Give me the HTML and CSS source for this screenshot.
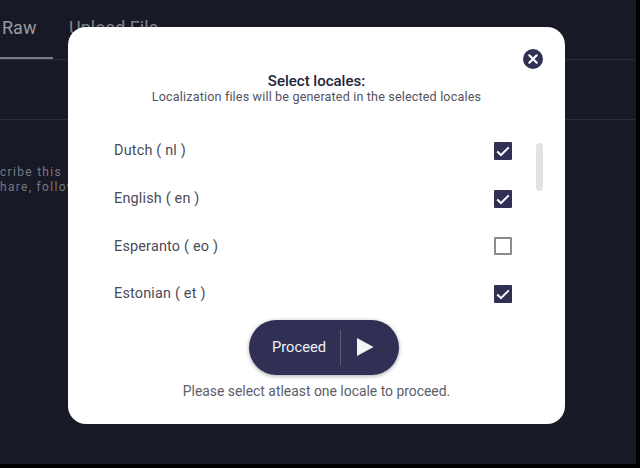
FILE: index.html
```html
<!DOCTYPE html>
<html lang="en">
<head>
<meta charset="utf-8">
<title>Select locales</title>
<link rel="stylesheet" href="styles.css">
</head>
<body>
<div class="app">
  <nav class="tabs">
    <div class="tab tab-active">Raw</div>
    <div class="tab">Upload File</div>
  </nav>
  <div class="band"></div>
  <div class="desc">
    <p>cribe this</p>
    <p>hare, follow</p>
  </div>
  <div class="modal">
    <button class="close" aria-label="Close">
      <svg viewBox="0 0 20 20" width="20" height="20"><circle cx="10" cy="10" r="10" fill="#2f3054"/><path d="M6.3 6.3l7.4 7.4M13.7 6.3l-7.4 7.4" stroke="#fff" stroke-width="2.2" stroke-linecap="round"/></svg>
    </button>
    <header class="head">
      <h1>Select locales:</h1>
      <p>Localization files will be generated in the selected locales</p>
    </header>
    <div class="list-wrap">
      <ul class="list">
        <li><span>Dutch ( nl )</span><span class="check on"><svg viewBox="0 0 18 18" width="18" height="18"><path d="M3.2 9.4l3.8 3.6 7.8-7.6" fill="none" stroke="#fff" stroke-width="2"/></svg></span></li>
        <li><span>English ( en )</span><span class="check on"><svg viewBox="0 0 18 18" width="18" height="18"><path d="M3.2 9.4l3.8 3.6 7.8-7.6" fill="none" stroke="#fff" stroke-width="2"/></svg></span></li>
        <li><span>Esperanto ( eo )</span><span class="check"></span></li>
        <li><span>Estonian ( et )</span><span class="check on"><svg viewBox="0 0 18 18" width="18" height="18"><path d="M3.2 9.4l3.8 3.6 7.8-7.6" fill="none" stroke="#fff" stroke-width="2"/></svg></span></li>
      </ul>
      <div class="thumb"></div>
    </div>
    <div class="foot">
      <button class="proceed">
        <span class="label">Proceed</span>
        <span class="sep"></span>
        <svg viewBox="0 0 18 18" width="18" height="18"><path d="M1 0l16.500 9-16.500 9z" fill="#f4f4f6"/></svg>
      </button>
      <p class="hint">Please select atleast one locale to proceed.</p>
    </div>
  </div>
</div>
</body>
</html>
```
FILE: styles.css
```css
* { box-sizing: border-box; }
html, body { margin: 0; height: 100%; background: #000; overflow: hidden; }
body { font-family: Roboto, "Liberation Sans", sans-serif; }
p, h1, ul { margin: 0; padding: 0; }

.app { position: relative; width: 636px; height: 464px; background: #171926; overflow: hidden; }

.tabs { display: flex; height: 60px; border-bottom: 1px solid #2a2c3a; }
.tab { padding: 17px 0 0 16px; font-size: 18px; line-height: 22px; color: #7f818a; }
.tab-active { width: 53px; padding-left: 2px; height: 59px; border-bottom: 2px solid #7d7e85; color: #9a9ba1; }

.band { height: 60px; border-bottom: 1px solid #2a2c3a; }

.desc { margin-top: 45px; font-size: 12px; line-height: 15px; letter-spacing: 1.3px; color: #767882; white-space: nowrap; }

.modal { position: absolute; left: 68px; top: 27px; width: 497px; height: 397px; background: #fff; border-radius: 18px; display: flex; flex-direction: column; }
.close { position: absolute; top: 22px; right: 22px; width: 20px; height: 20px; padding: 0; border: 0; background: none; display: block; }
.close svg { display: block; }

.head { padding-top: 46px; text-align: center; color: #23243a; }
.head h1 { font-size: 15px; line-height: 16px; font-weight: 500; }
.head p { font-size: 12.6px; line-height: 15px; color: #52535f; letter-spacing: 0.15px; }

.list-wrap { position: relative; margin-top: 23px; height: 191.500px; }
.list { list-style: none; padding: 0 53px 0 46px; }
.list li { height: 47.7px; display: flex; align-items: center; justify-content: space-between; font-size: 14.4px; color: #4a4b57; letter-spacing: 0.2px; }
.check { width: 18px; height: 18px; border: 2px solid #8a8a90; background: #fff; display: block; border-radius: 1px; }
.check.on { border: 0; background: #2f3054; }
.check svg { display: block; }
.thumb { position: absolute; left: 468px; top: 16px; width: 7px; height: 48px; border-radius: 4px; background: #e2e2e4; }

.foot { display: flex; flex-direction: column; align-items: center; margin-top: 1px; }
.proceed { margin-left: 15px; width: 150px; height: 55px; border: 0; border-radius: 28px; background: #2f3054; box-shadow: 0 1px 4px rgba(0,0,0,.35); display: flex; align-items: center; padding: 0 0 0 23px; color: #f1f1f3; font-family: inherit; }
.label { font-size: 14.7px; font-weight: 400; width: 68px; text-align: left; }
.sep { width: 1px; height: 35px; background: #5b5c78; margin-right: 15px; }
.hint { margin-top: 6px; font-size: 13.9px; line-height: 18px; color: #5d5e69; padding-top: 1px; }
```
